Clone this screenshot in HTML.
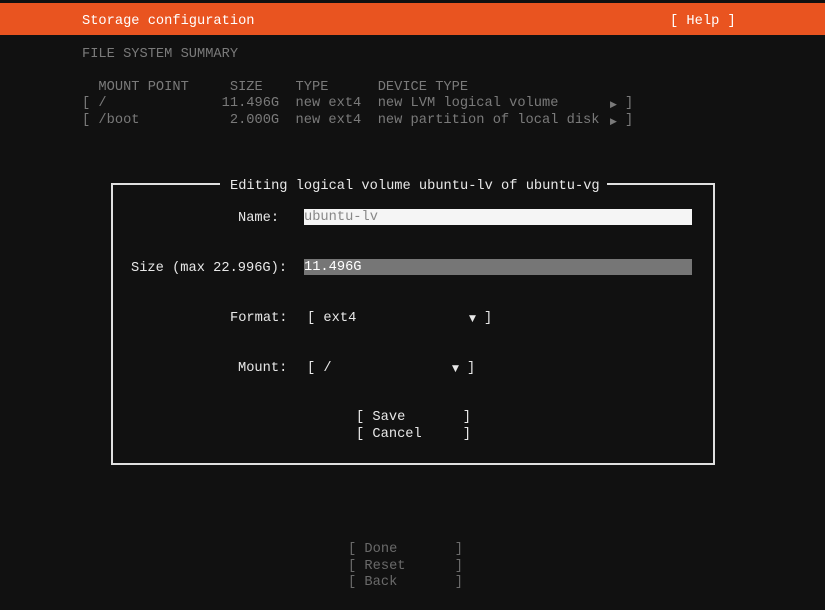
<!DOCTYPE html>
<html><head><meta charset="utf-8"><style>
body{margin:0;width:825px;height:610px;background:#111111;overflow:hidden;position:relative;font-family:"Liberation Mono","DejaVu Sans Mono",monospace;font-size:13.7px;}
.t{position:absolute;white-space:pre;line-height:16px;height:16px;margin-top:2px;}
.d{color:#7a7a7a}
.w{color:#e8e8e8}
.hdr{position:absolute;left:0;top:3px;width:825px;height:32px;background:#e95420;}
.box{position:absolute;left:111px;top:183px;width:600px;height:278px;border:2px solid #e0e0e0;}
.gap{position:absolute;left:220px;top:180px;width:387px;height:8px;background:#111;}
.f{position:absolute;left:304px;width:388px;height:16px;}
.tri{font-family:"DejaVu Sans",sans-serif;font-size:9px;}
</style></head><body>
<div class="hdr"></div>
<div class="t" style="left:82px;top:12px;color:#fff">Storage configuration</div>
<div class="t" style="left:670px;top:12px;color:#fff">[ Help ]</div>

<div class="t d" style="left:82px;top:45px">FILE SYSTEM SUMMARY</div>
<div class="t d" style="left:82px;top:78px">  MOUNT POINT     SIZE    TYPE      DEVICE TYPE</div>
<div class="t d" style="left:82px;top:94px">[ /              11.496G  new ext4  new LVM logical volume</div>
<div class="t d" style="left:82px;top:111px">[ /boot           2.000G  new ext4  new partition of local disk</div>
<div class="t d tri" style="left:610px;top:95px">▶</div>
<div class="t d" style="left:625px;top:94px">]</div>
<div class="t d tri" style="left:610px;top:112px">▶</div>
<div class="t d" style="left:625px;top:111px">]</div>

<div class="box"></div>
<div class="gap"></div>
<div class="t w" style="left:230px;top:177px">Editing logical volume ubuntu-lv of ubuntu-vg</div>

<div class="t w" style="left:238px;top:209px">Name:</div>
<div class="f" style="top:209px;background:#f5f5f5"></div>
<div class="t" style="left:304px;top:208px;color:#888">ubuntu-lv</div>

<div class="t w" style="left:131px;top:259px">Size (max 22.996G):</div>
<div class="f" style="top:259px;background:#767676"></div>
<div class="t" style="left:304px;top:258px;color:#fff">11.496G</div>

<div class="t w" style="left:230px;top:309px">Format:</div>
<div class="t w" style="left:307px;top:309px">[ ext4</div>
<div class="t w tri" style="left:469px;top:309px">▼</div>
<div class="t w" style="left:484px;top:309px">]</div>

<div class="t w" style="left:238px;top:359px">Mount:</div>
<div class="t w" style="left:307px;top:359px">[ /</div>
<div class="t w tri" style="left:452px;top:359px">▼</div>
<div class="t w" style="left:467px;top:359px">]</div>

<div class="t w" style="left:356px;top:408px">[ Save       ]</div>
<div class="t w" style="left:356px;top:425px">[ Cancel     ]</div>

<div class="t" style="left:348px;top:540px;color:#6a6a6a">[ Done       ]</div>
<div class="t" style="left:348px;top:557px;color:#6a6a6a">[ Reset      ]</div>
<div class="t" style="left:348px;top:573px;color:#6a6a6a">[ Back       ]</div>
</body></html>
